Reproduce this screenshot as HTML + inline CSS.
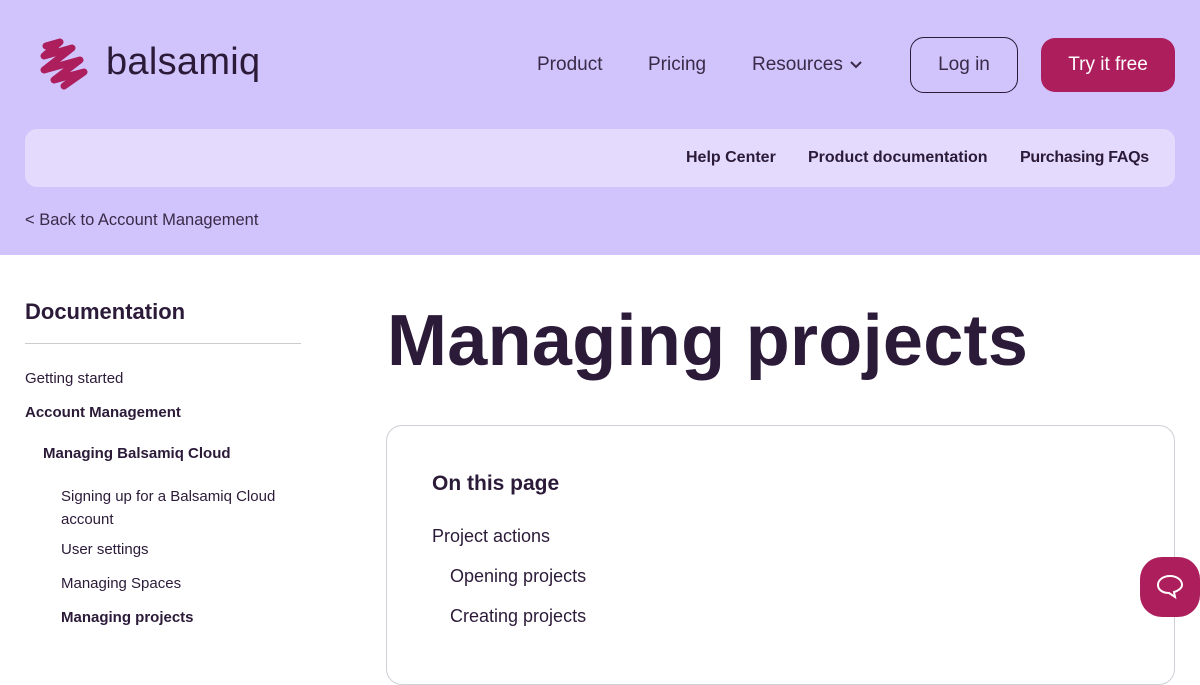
<!DOCTYPE html>
<html><head><meta charset="utf-8"><style>
*{margin:0;padding:0;box-sizing:border-box}
body{width:1200px;height:627px;overflow:hidden;font-family:"Liberation Sans",sans-serif;color:#2b1a38;background:#fff;position:relative}
.top{position:absolute;left:0;top:0;width:1200px;height:255px;background:#d1c4fd}
.logo{position:absolute;left:38px;top:38px}
.logo span{position:absolute;left:68px;top:3px;font-size:38px;color:#2b1a38;letter-spacing:0.3px}
.nav a{position:absolute;top:54px;font-size:19px;color:#3a2a48}
.login{position:absolute;left:910px;top:37px;width:108px;height:56px;border:1px solid #2b1a38;border-radius:14px;font-size:19px;text-align:center;line-height:54px;color:#3a2a48}
.try{position:absolute;left:1041px;top:38px;width:134px;height:54px;background:#ad1e5c;border-radius:14px;color:#fff;font-size:19px;text-align:center;line-height:54px}
.sub{position:absolute;left:25px;top:129px;width:1150px;height:58px;background:#e3dafd;border-radius:12px}
.sub a{position:absolute;top:20px;font-size:16px;font-weight:bold;color:#2b1a38}
.back{position:absolute;left:25px;top:211px;font-size:16.5px;color:#3a2a48;letter-spacing:0}
.side{position:absolute;left:25px}
h1{position:absolute;left:387px;top:300px;font-size:72px;font-weight:bold;color:#2b1a38;letter-spacing:0.3px}
.box{position:absolute;left:386px;top:425px;width:789px;height:260px;border:1px solid #cfcfd6;border-radius:16px}
.t{position:absolute;font-size:18px;color:#2b1a38}
</style></head><body>
<div class="top">
<div class="logo"><svg width="56" height="56" viewBox="0 0 56 56"><path d="M8 8 L22 4 L6 18 L34 10 L6 32 L42 22 L16 42 L46 34 L26 48" fill="none" stroke="#ad1e5c" stroke-width="7" stroke-linecap="round" stroke-linejoin="round"/></svg><span>balsamiq</span></div>
<div class="nav"><a style="left:537px">Product</a><a style="left:648px">Pricing</a><a style="left:752px">Resources</a>
<svg style="position:absolute;left:849px;top:60px" width="14" height="10" viewBox="0 0 14 10"><path d="M2 2l5 5 5-5" fill="none" stroke="#3a2a48" stroke-width="2"/></svg></div>
<div class="login">Log in</div><div class="try">Try it free</div>
<div class="sub"><a style="left:661px">Help Center</a><a style="left:783px">Product documentation</a><a style="left:995px;letter-spacing:-0.3px">Purchasing FAQs</a></div>
<div class="back">&lt; Back to Account Management</div>
</div>
<div class="side" style="top:299px;font-size:22px;font-weight:bold">Documentation</div>
<div style="position:absolute;left:25px;top:343px;width:276px;height:1px;background:#ccc"></div>
<div class="side" style="top:370px;font-size:15px">Getting started</div>
<div class="side" style="top:404px;font-size:15px;font-weight:bold">Account Management</div>
<div class="side" style="left:43px;top:445px;font-size:15px;font-weight:bold">Managing Balsamiq Cloud</div>
<div class="side" style="left:61px;top:485px;font-size:15px;line-height:23px;width:240px">Signing up for a Balsamiq Cloud account</div>
<div class="side" style="left:61px;top:541px;font-size:15px">User settings</div>
<div class="side" style="left:61px;top:575px;font-size:15px">Managing Spaces</div>
<div class="side" style="left:61px;top:609px;font-size:15px;font-weight:bold">Managing projects</div>
<h1>Managing projects</h1>
<div class="box"></div>
<div class="t" style="left:432px;top:472px;font-size:21px;font-weight:bold">On this page</div>
<div class="t" style="left:432px;top:526px">Project actions</div>
<div class="t" style="left:450px;top:566px">Opening projects</div>
<div class="t" style="left:450px;top:606px">Creating projects</div>
<div style="position:absolute;left:1140px;top:557px;width:60px;height:60px;background:#ad1e5c;border-radius:22px"></div>
<svg style="position:absolute;left:1155px;top:572px" width="30" height="30" viewBox="0 0 30 30"><path d="M15 4C8 4 3 8 3 13c0 5 5 8 11 8l6 4-1-5c4-1 8-4 8-7 0-5-5-9-12-9z" fill="none" stroke="#fff" stroke-width="2"/></svg>
</body></html>
